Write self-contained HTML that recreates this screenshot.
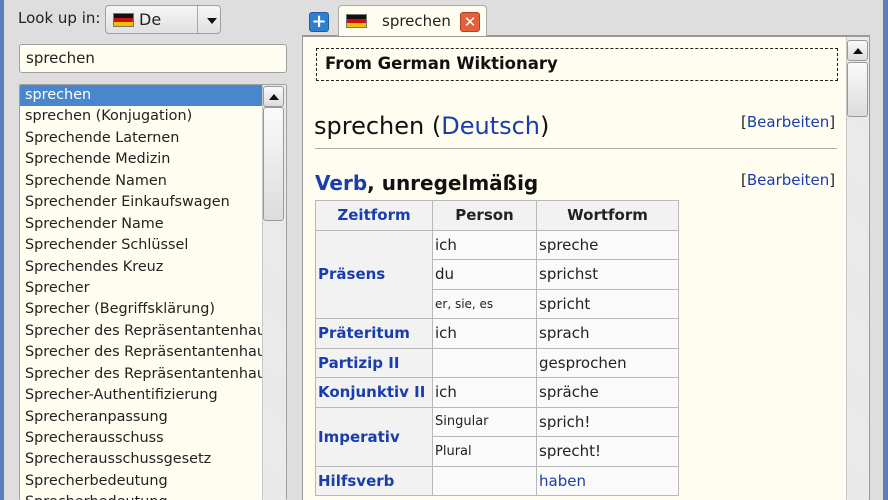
<!DOCTYPE html>
<html style="width:888px;height:500px;overflow:hidden"><head><meta charset="utf-8"><style>
*{margin:0;padding:0;box-sizing:border-box}
body{width:888px;height:500px;overflow:hidden;background:#dedede;font-family:"DejaVu Sans","Liberation Sans",sans-serif;position:relative;color:#222}
.abs{position:absolute}
.lbl{left:18px;top:9px;font-size:15px;color:#222}
.combo{left:105px;top:5px;width:116px;height:29px;border:1px solid #a0a0a0;border-radius:4px;background:linear-gradient(#f6f6f6,#e0e0e0)}
.combo .t{position:absolute;left:33px;top:4px;font-size:16px}
.combo .sep{position:absolute;left:91px;top:0;bottom:0;border-left:1px solid #a8a8a8}
.combo .ar{position:absolute;left:101px;top:12px;border:5px solid transparent;border-top:6px solid #111;border-bottom:0}
.flag{width:21px;height:14px;background:linear-gradient(#111 0 33%,#d01010 33% 66%,#f0c000 66%);border:1px solid #777}
.input{left:19px;top:44px;width:268px;height:29px;border:1px solid #a0a0a0;border-radius:3px;background:#fffdf0;font-size:15px;padding:4px 0 0 6px}
.list{left:19px;top:84px;width:268px;height:416px;border:1px solid #a0a0a0;border-bottom:none;border-radius:2px;background:#fffdf0;overflow:hidden}
.list div.r{height:21.45px;font-size:14.4px;line-height:21px;padding-left:5px;white-space:nowrap;overflow:hidden;width:242px}
.list div.sel{background:#4a86cc;color:#fff;width:242px}
.sb{background:repeating-linear-gradient(45deg,#e4e4e4 0 1px,#f0f0f0 1px 2px);border-left:1px solid #c8c8c8}
.btn{border:1px solid #999;border-radius:3px;background:linear-gradient(#fafafa,#dcdcdc)}
.up{width:0;height:0;border:5px solid transparent;border-bottom:6px solid #111;border-top:0;position:absolute}
.pane{left:302px;top:36px;width:568px;height:464px;border:1px solid #999;border-bottom:none;background:#fffdf0;overflow:hidden}
.tab{left:338px;top:5px;width:149px;height:32px;border:1px solid #aaa;border-bottom:none;border-radius:4px 4px 0 0;background:#fffdf0}
a,.b{color:#1a3dae}
table{border-collapse:collapse;font-size:15px}
td,th{border:1px solid #b8b8b8;height:29.5px;padding:0 2px;text-align:left;white-space:nowrap}
th{background:#f2f2f2;text-align:center;font-weight:bold}
td.h{font-weight:bold;color:#1a3dae;background:#f2f2f2}
td.c{background:#fafafa}
</style></head><body>
<div class="abs" style="left:0;top:0;width:4px;height:500px;background:#5b7fb8"></div>
<div class="abs" style="left:883px;top:0;width:5px;height:500px;background:#5b7fb8"></div>
<div class="abs lbl">Look up in:</div>
<div class="abs combo"><div class="flag abs" style="left:7px;top:7px"></div><span class="t">De</span><div class="sep"></div><div class="ar"></div></div>
<div class="abs input">sprechen</div>
<div class="abs list">
<div class="r sel">sprechen</div>
<div class="r">sprechen (Konjugation)</div>
<div class="r">Sprechende Laternen</div>
<div class="r">Sprechende Medizin</div>
<div class="r">Sprechende Namen</div>
<div class="r">Sprechender Einkaufswagen</div>
<div class="r">Sprechender Name</div>
<div class="r">Sprechender Schlüssel</div>
<div class="r">Sprechendes Kreuz</div>
<div class="r">Sprecher</div>
<div class="r">Sprecher (Begriffsklärung)</div>
<div class="r">Sprecher des Repräsentantenhauses</div>
<div class="r">Sprecher des Repräsentantenhauses</div>
<div class="r">Sprecher des Repräsentantenhauses</div>
<div class="r">Sprecher-Authentifizierung</div>
<div class="r">Sprecheranpassung</div>
<div class="r">Sprecherausschuss</div>
<div class="r">Sprecherausschussgesetz</div>
<div class="r">Sprecherbedeutung</div>
<div class="r">Sprecherbedeutung</div>
<div class="abs sb" style="left:242px;top:0;width:24px;height:416px"></div>
<div class="abs btn" style="left:243px;top:1px;width:21px;height:21px"><div class="up" style="left:5px;top:7px"></div></div>
<div class="abs btn" style="left:243px;top:22px;width:21px;height:114px"></div>
</div>
<div class="abs" style="left:309px;top:12px;width:20px;height:20px;border-radius:3px;background:#2f7fcf;border:1px solid #1d5d9e;color:#fff;font-weight:bold;font-size:18px;line-height:17px;text-align:center">+</div>
<div class="abs" style="left:302px;top:35px;width:568px;border-top:1px solid #999"></div>
<div class="abs tab"><div class="flag abs" style="left:7px;top:8px"></div><span class="abs" style="left:43px;top:6px;font-size:15px">sprechen</span><div class="abs" style="left:121px;top:6px;width:20px;height:20px;border-radius:3px;background:#e2603c;border:1px solid #b84020;color:#fff;font-size:15px;line-height:18px;text-align:center;font-weight:bold">✕</div></div>
<div class="abs pane">
<div class="abs" style="left:13px;top:11px;width:522px;height:33px;border:1px dashed #222;font-weight:bold;font-size:16.5px;padding:5px 0 0 8px;color:#111">From German Wiktionary</div>
<div class="abs" style="left:11px;top:75px;font-size:24px;color:#111">sprechen (<span class="b">Deutsch</span>)</div>
<div class="abs" style="left:438px;top:76px;font-size:15px">[<a>Bearbeiten</a>]</div>
<div class="abs" style="left:12px;top:111px;width:522px;border-top:1px solid #aaa"></div>
<div class="abs" style="left:12px;top:134px;font-size:20px;font-weight:bold;color:#111"><span class="b">Verb</span>, unregelmäßig</div>
<div class="abs" style="left:438px;top:134px;font-size:15px">[<a>Bearbeiten</a>]</div>
<table class="abs" style="left:12px;top:163px;width:364px">
<tr><th style="width:117px;color:#1a3dae">Zeitform</th><th style="width:104px">Person</th><th>Wortform</th></tr>
<tr><td class="h" rowspan="3">Präsens</td><td class="c">ich</td><td class="c">spreche</td></tr>
<tr><td class="c">du</td><td class="c">sprichst</td></tr>
<tr><td class="c" style="font-size:12px">er, sie, es</td><td class="c">spricht</td></tr>
<tr><td class="h">Präteritum</td><td class="c">ich</td><td class="c">sprach</td></tr>
<tr><td class="h">Partizip II</td><td class="c"></td><td class="c">gesprochen</td></tr>
<tr><td class="h">Konjunktiv II</td><td class="c">ich</td><td class="c">spräche</td></tr>
<tr><td class="h" rowspan="2">Imperativ</td><td class="c" style="font-size:13px">Singular</td><td class="c">sprich!</td></tr>
<tr><td class="c" style="font-size:13px">Plural</td><td class="c">sprecht!</td></tr>
<tr><td class="h">Hilfsverb</td><td class="c"></td><td class="c"><a>haben</a></td></tr>
</table>
<div class="abs sb" style="left:543px;top:0;width:24px;height:464px"></div>
<div class="abs btn" style="left:544px;top:3px;width:21px;height:21px"><div class="up" style="left:5px;top:7px"></div></div>
<div class="abs btn" style="left:544px;top:25px;width:21px;height:55px"></div>
</div>
</body></html>
